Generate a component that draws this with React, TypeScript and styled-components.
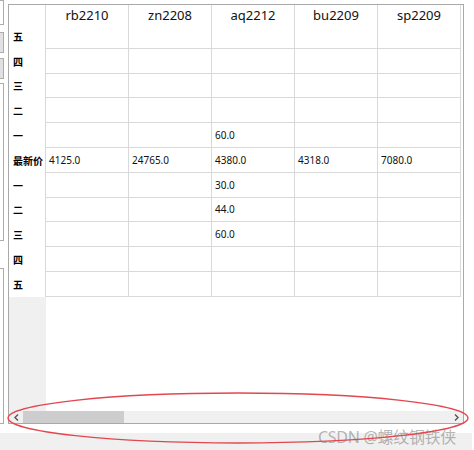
import React from "react";
import styled, { createGlobalStyle } from "styled-components";

const Global = createGlobalStyle`
  html, body { margin: 0; padding: 0; background: #ffffff; }
  body { font-family: "Noto Sans", "Noto Sans CJK SC", sans-serif; }
`;

const Page = styled.div`
  position: relative;
  width: 474px;
  height: 450px;
  overflow: hidden;
  display: flex;
  flex-direction: column;
`;

const Main = styled.div`
  display: flex;
  align-items: flex-start;
  height: 424px;
`;

const LeftStrip = styled.div`
  width: 4px;
  display: flex;
  flex-direction: column;
  margin-right: 4px;
`;

const StripBox = styled.div<{ $h: number; $mt: number; $fill?: boolean }>`
  height: ${(p) => p.$h}px;
  margin-top: ${(p) => p.$mt}px;
  box-sizing: border-box;
  border: 1px solid #acacac;
  border-left: none;
  background: ${(p) => (p.$fill ? "#e1e1e1" : "#ffffff")};
`;

const Frame = styled.div`
  margin-top: 4px;
  width: 456px;
  height: 420px;
  box-sizing: border-box;
  border: 1px solid #a9a9a9;
  display: flex;
  flex-direction: column;
  background: #ffffff;
`;

const View = styled.div`
  flex: 1;
  display: flex;
  flex-direction: column;
`;

const Grid = styled.div`
  display: grid;
  grid-template-columns: 37px repeat(5, 83px);
  grid-template-rows: 19px repeat(11, 24.8px);
`;

const Corner = styled.div`
  border-right: 1px solid #d9d9d9;
`;

const HeadCell = styled.div`
  border-right: 1px solid #d9d9d9;
  display: flex;
  align-items: center;
  justify-content: center;
  font-size: 13px;
  color: #111;
  line-height: 1;
  padding-top: 1px;
`;

const RowLabel = styled.div`
  border-right: 1px solid #d9d9d9;
  display: flex;
  align-items: center;
  padding-left: 4px;
  font-family: "Noto Sans CJK SC", sans-serif;
  font-weight: 700;
  font-size: 10px;
  color: #000;
  white-space: nowrap;
`;

const Cell = styled.div`
  border-right: 1px solid #d9d9d9;
  border-bottom: 1px solid #d9d9d9;
  display: flex;
  align-items: center;
  padding-left: 3px;
  font-size: 10px;
  color: #111;
`;

const Filler = styled.div`
  flex: 1;
  display: flex;
`;

const GrayStrip = styled.div`
  width: 37px;
  background: #f0f0f0;
`;

const ScrollBar = styled.div`
  height: 12px;
  display: flex;
  background: #f0f0f0;
  align-items: stretch;
`;

const ArrowBtn = styled.div`
  width: 14px;
  display: flex;
  align-items: center;
  justify-content: center;
`;

const Track = styled.div`
  flex: 1;
  display: flex;
  align-items: stretch;
`;

const Thumb = styled.div`
  width: 101px;
  background: #cdcdcd;
`;

const Band = styled.div`
  margin-top: 9px;
  height: 17px;
  width: 472px;
  background: #f0f0f0;
`;

const Watermark = styled.div`
  position: absolute;
  left: 318px;
  top: 424px;
  font-family: "Noto Sans", "Noto Sans CJK SC", sans-serif;
  font-size: 16px;
  color: rgba(120, 120, 120, 0.55);
  white-space: nowrap;
  letter-spacing: -0.3px;
`;

const Overlay = styled.svg`
  position: absolute;
  left: 0;
  top: 0;
  pointer-events: none;
`;

const columns = ["rb2210", "zn2208", "aq2212", "bu2209", "sp2209"];
const rows: { label: string; values: string[] }[] = [
  { label: "五", values: ["", "", "", "", ""] },
  { label: "四", values: ["", "", "", "", ""] },
  { label: "三", values: ["", "", "", "", ""] },
  { label: "二", values: ["", "", "", "", ""] },
  { label: "一", values: ["", "", "60.0", "", ""] },
  { label: "最新价", values: ["4125.0", "24765.0", "4380.0", "4318.0", "7080.0"] },
  { label: "一", values: ["", "", "30.0", "", ""] },
  { label: "二", values: ["", "", "44.0", "", ""] },
  { label: "三", values: ["", "", "60.0", "", ""] },
  { label: "四", values: ["", "", "", "", ""] },
  { label: "五", values: ["", "", "", "", ""] },
];

const Chevron = ({ dir }: { dir: "left" | "right" }) => (
  <svg width="5" height="7" viewBox="0 0 5 7">
    <polyline
      points={dir === "left" ? "4,0.5 1,3.5 4,6.5" : "1,0.5 4,3.5 1,6.5"}
      fill="none"
      stroke="#555"
      strokeWidth="1.4"
    />
  </svg>
);

export default function App() {
  return (
    <Page>
      <Global />
      <Main>
        <LeftStrip>
          <StripBox $h={25} $mt={0} />
          <StripBox $h={21} $mt={7} $fill />
          <StripBox $h={21} $mt={5} $fill />
          <StripBox $h={158} $mt={4} />
          <StripBox $h={156} $mt={27} />
        </LeftStrip>
        <Frame>
          <View>
            <Grid>
              <Corner />
              {columns.map((c) => (
                <HeadCell key={c}>{c}</HeadCell>
              ))}
              {rows.map((r, i) => (
                <React.Fragment key={i}>
                  <RowLabel>{r.label}</RowLabel>
                  {r.values.map((v, j) => (
                    <Cell key={j}>{v}</Cell>
                  ))}
                </React.Fragment>
              ))}
            </Grid>
            <Filler>
              <GrayStrip />
            </Filler>
          </View>
          <ScrollBar>
            <ArrowBtn>
              <Chevron dir="left" />
            </ArrowBtn>
            <Track>
              <Thumb />
            </Track>
            <ArrowBtn>
              <Chevron dir="right" />
            </ArrowBtn>
          </ScrollBar>
        </Frame>
      </Main>
      <Band />
      <Watermark>CSDN @螺纹钢铁侠</Watermark>
      <Overlay width="474" height="450" viewBox="0 0 474 450">
        <ellipse cx="238" cy="418" rx="230" ry="25" fill="none" stroke="#e2474f" strokeWidth="1.3" />
      </Overlay>
    </Page>
  );
}
